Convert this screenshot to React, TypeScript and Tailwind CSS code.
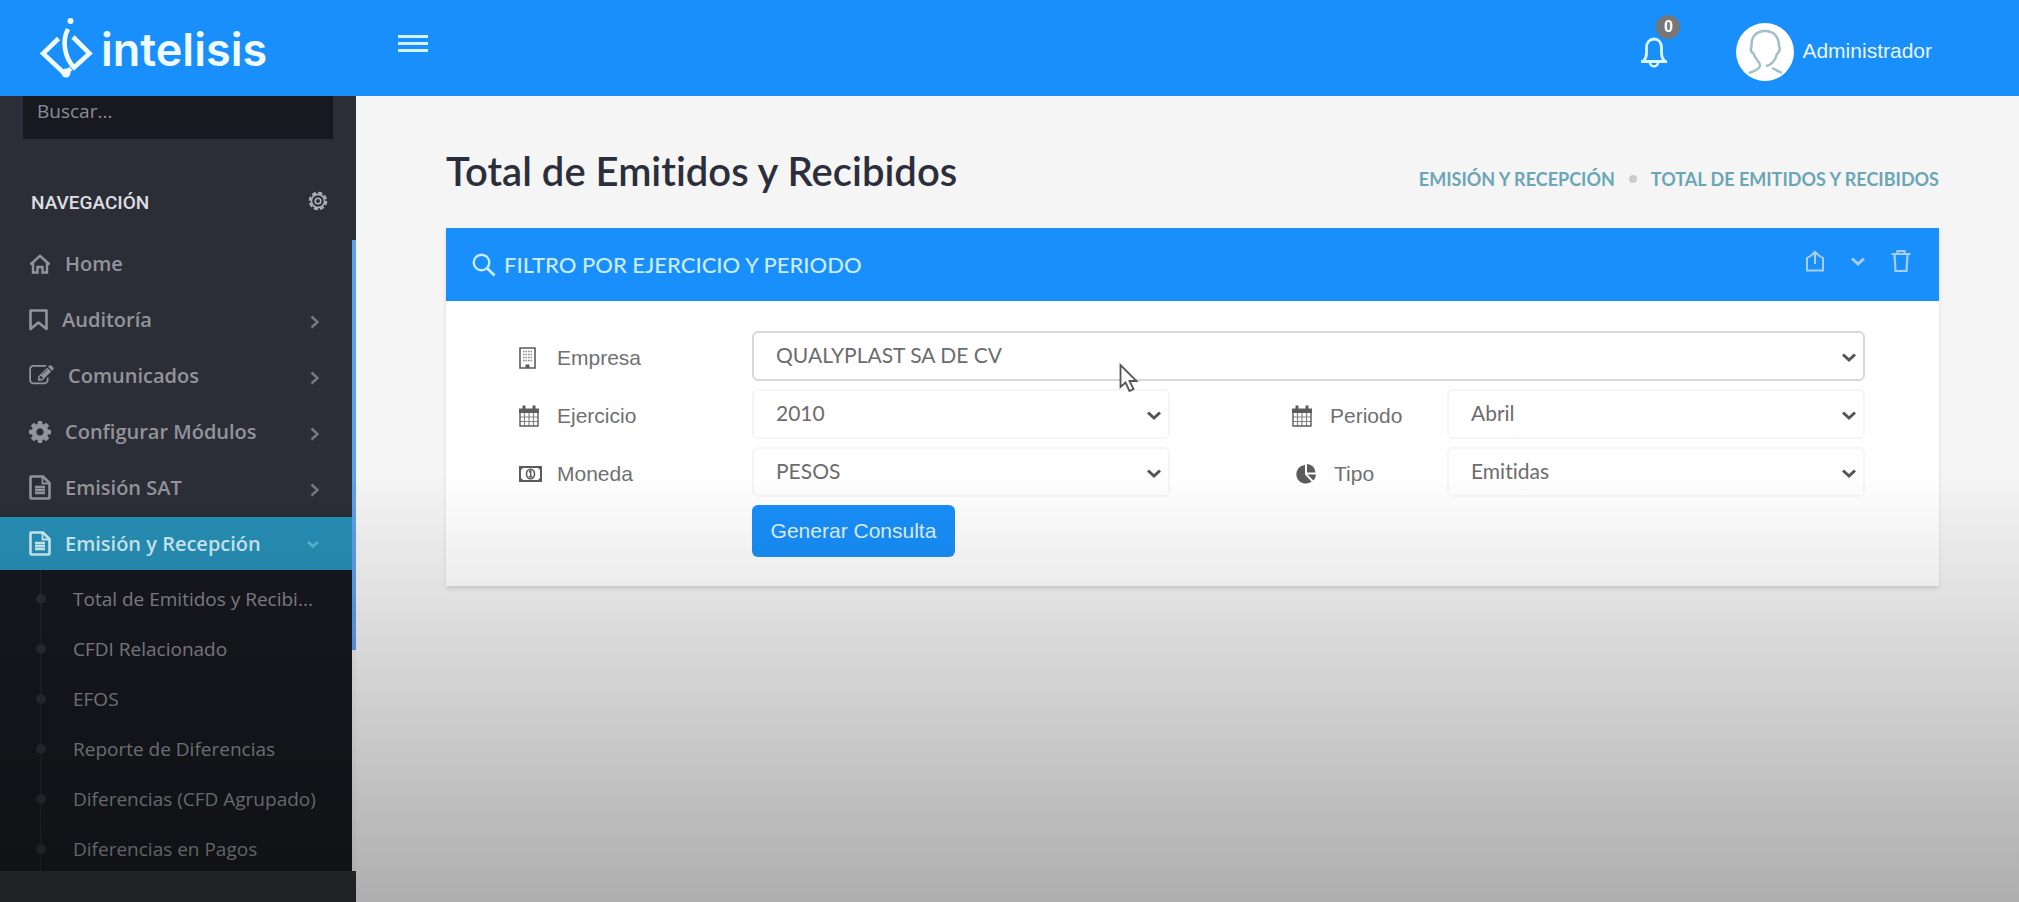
import type { ReactNode } from 'react';

type IconProps = { className?: string };

const Icon = ({ className = 'size-6', box = '0 0 24 24', children }: IconProps & { box?: string; children: ReactNode }) => (
  <svg viewBox={box} className={className} fill="none" stroke="currentColor" strokeWidth={2} aria-hidden="true">
    {children}
  </svg>
);

const HomeIcon = () => (
  <Icon box="0 0 22 20" className="h-5 w-[22px]">
    <path d="M1.5 10.5 11 1.8l9.500 8.700" strokeWidth={2.400} />
    <path d="M4 9v9.500h4.500V13h5v5.500H18V9" strokeWidth={2.400} />
  </Icon>
);

const BookmarkIcon = () => (
  <Icon box="0 0 19 22" className="h-[22px] w-[19px]">
    <path d="M1.500 1.500h16v18.500l-8-6.500-8 6.500z" strokeWidth={2.600} strokeLinejoin="round" />
  </Icon>
);

const EditIcon = () => (
  <svg viewBox="0 128 1792 1536" className="h-[21px] w-[25px]" fill="currentColor" aria-hidden="true">
    <path d="M888 1184l116-116-152-152-116 116v56h96v96h56zm440-720q-16-16-33 1l-350 350q-17 17-1 33t33-1l350-350q17-17 1-33zm80 594v190q0 119-84.500 203.500t-203.500 84.500h-832q-119 0-203.500-84.500t-84.500-203.500v-832q0-119 84.500-203.500t203.500-84.500h832q63 0 117 25 15 7 18 23 3 17-9 29l-49 49q-14 14-32 8-23-6-45-6h-832q-66 0-113 47t-47 113v832q0 66 47 113t113 47h832q66 0 113-47t47-113v-126q0-13 9-22l64-64q15-15 35-7t20 29zm-96-738l288 288-672 672h-288v-288zm444 132l-92 92-288-288 92-92q28-28 68-28t68 28l152 152q28 28 28 68t-28 68z" />
  </svg>
);

const CogIcon = () => (
  <svg viewBox="128 128 1536 1536" className="size-[22px]" fill="currentColor" aria-hidden="true">
    <path d="M1152 896q0-106-75-181t-181-75-181 75-75 181 75 181 181 75 181-75 75-181zm512-109v222q0 12-8 23t-20 13l-185 28q-19 54-39 91 35 50 107 138 10 12 10 25t-9 23q-27 37-99 108t-94 71q-12 0-26-9l-138-108q-44 23-91 38-16 136-29 186-7 28-36 28h-222q-14 0-24.500-8.500t-11.500-21.500l-28-184q-49-16-90-37l-141 107q-10 9-25 9-14 0-25-11-126-114-165-168-7-10-7-23 0-12 8-23 15-21 51-66.500t54-70.500q-27-50-41-99l-183-27q-13-2-21-12.500t-8-23.500v-222q0-12 8-23t19-13l186-28q14-46 39-92-40-57-107-138-10-12-10-24 0-10 9-23 26-36 98.500-107.500t94.500-71.500q13 0 26 10l138 107q44-23 91-38 16-136 29-186 7-28 36-28h222q14 0 24.500 8.500t11.500 21.500l28 184q49 16 90 37l142-107q9-9 24-9 13 0 25 10 129 119 165 170 7 8 7 22 0 12-8 23-15 21-51 66.500t-54 70.500q26 50 41 98l183 28q13 2 21 12.500t8 23.500z" />
  </svg>
);

const FileIcon = () => (
  <Icon box="0 0 22 25" className="h-[25px] w-[22px]">
    <path d="M1.500 2.500q0-1 1-1H14l6.500 6.500v14.500q0 1-1 1h-17q-1 0-1-1z" strokeWidth={2.600} />
    <path d="M13.500 1.500v7h7" strokeWidth={1.800} />
    <path d="M6 12h10M6 15h10M6 18h10" strokeWidth={2.400} />
  </Icon>
);

const GearOutlineIcon = () => (
  <Icon box="0 0 20 20" className="size-5">
    <circle cx="10" cy="10" r="8.300" strokeWidth={2} strokeDasharray="4.200 2.320" />
    <circle cx="10" cy="10" r="6.600" strokeWidth={1.600} />
    <circle cx="10" cy="10" r="2.800" strokeWidth={1.600} />
  </Icon>
);

const BellIcon = () => (
  <Icon box="0 0 28 31" className="h-[31px] w-7">
    <path d="M1 24.500h26M3.500 24q3-3 3-8v-5.500C6.500 5.500 9.500 2 14 2s7.500 3.500 7.500 8.500V16q0 5 3 8" strokeWidth={2.800} />
    <path d="M10 25.500c0 5 8 5 8 0" strokeWidth={2.400} />
  </Icon>
);

const ShareIcon = () => (
  <Icon box="0 0 20 22" className="h-[22px] w-5">
    <path d="M5.500 6 2 8v12.500h16V8l-3.500-2" />
    <path d="M10 14V2M5 6.500 10 1.800l5 4.700" />
  </Icon>
);

const TrashIcon = () => (
  <Icon box="0 0 20 24" className="h-6 w-5">
    <path d="M.500 5h19M3.500 5.500 4.500 22h11l1-16.500M6.500 5V2h7v3" strokeWidth={2.200} />
  </Icon>
);

const Chevron = ({ className }: { className: string }) => (
  <svg viewBox="0 0 16 12" className={className} fill="none" stroke="currentColor" strokeWidth={3} aria-hidden="true">
    <path d="M2 3.500 8 9l6-5.500" />
  </svg>
);

const ChevronRight = () => (
  <svg viewBox="0 0 10 14" className="h-3.5 w-2.5" fill="none" stroke="currentColor" strokeWidth={2.400} aria-hidden="true">
    <path d="M1.500 1.500 7.500 7l-6 5.500" />
  </svg>
);

const SearchIcon = () => (
  <Icon className="size-6">
    <circle cx="9.500" cy="9.500" r="7.800" strokeWidth={2.400} />
    <path d="m15.200 15.200 7.300 7.300" strokeWidth={2.800} />
  </Icon>
);

const BuildingIcon = () => (
  <Icon box="0 0 17 22" className="h-[22px] w-[17px]">
    <path d="M1 1h15v20H1z" strokeWidth={1.600} />
    <path d="M4 4.500h9M4 7.500h9M4 10.500h9M4 13.500h9" strokeWidth={1.600} strokeDasharray="1.600 .900" opacity=".7" />
    <path d="M6.500 17.500h4V21h-4z" fill="currentColor" stroke="none" />
  </Icon>
);

const CalendarIcon = () => (
  <Icon box="0 0 20 22" className="h-[22px] w-5">
    <path d="M0 3.500h20V8H0z" fill="currentColor" stroke="none" />
    <path d="M5 .500v5M15 .500v5" strokeWidth={3} />
    <path d="M1 7v14h18V7" strokeWidth={1.400} />
    <path d="M1 12h18M1 16.500h18M5.500 8v13M10 8v13M14.500 8v13" strokeWidth={1.200} opacity=".75" />
  </Icon>
);

const MoneyIcon = () => (
  <Icon box="0 0 23 16" className="h-4 w-[23px]">
    <path d="M1 1h21v14H1z" />
    <path d="M1 1h4L1 5zM22 1v4l-4-4zM1 15v-4l4 4zM22 15h-4l4-4z" fill="currentColor" stroke="none" />
    <ellipse cx="11.500" cy="8" rx="4" ry="4.800" strokeWidth={1.600} />
    <path d="M10 6.200 11.700 5v5.500M9.800 10.700h3.600" strokeWidth={1.500} />
  </Icon>
);

const PieIcon = () => (
  <svg viewBox="0 0 20 20" className="size-5" fill="currentColor" aria-hidden="true">
    <path d="M9 1v9.500l6.500 7A9.300 9.300 0 1 1 9 1z" />
    <path d="M11 0a9 9 0 0 1 8.500 8.500H11z" />
    <path d="M11.500 10.500H20q-.2 3.500-2.600 6z" />
  </svg>
);

const Logo = () => (
  <a href="#inicio" className="flex items-center gap-2 text-[#f0fbff]">
    <svg viewBox="0 0 53 60" className="h-[60px] w-[53px]" fill="none" stroke="currentColor" strokeWidth={4.600} aria-hidden="true">
      <circle cx="30.500" cy="3" r="3" fill="currentColor" stroke="none" />
      <path d="M18.500 20.500 3 35.500 24.500 55.500l6.500-5" />
      <path d="M28 11c-6 11-4 28 6 38.500L49.500 35.500 33 19" />
      <circle cx="26" cy="55" r="4.500" fill="currentColor" stroke="none" />
    </svg>
    <span className="pt-1 font-['Inter',sans-serif] text-[45px] leading-[60px] font-semibold">intelisis</span>
  </a>
);

const navItems: { label: string; icon: ReactNode; arrow: boolean }[] = [
  { label: 'Home', icon: <HomeIcon />, arrow: false },
  { label: 'Auditoría', icon: <BookmarkIcon />, arrow: true },
  { label: 'Comunicados', icon: <EditIcon />, arrow: true },
  { label: 'Configurar Módulos', icon: <CogIcon />, arrow: true },
  { label: 'Emisión SAT', icon: <FileIcon />, arrow: true },
];

const subItems = [
  'Total de Emitidos y Recibi...',
  'CFDI Relacionado',
  'EFOS',
  'Reporte de Diferencias',
  'Diferencias (CFD Agrupado)',
  'Diferencias en Pagos',
];

const FieldLabel = ({ id, icon, children, className = '' }: { id: string; icon: ReactNode; children: ReactNode; className?: string }) => (
  <label htmlFor={id} className={`flex items-center gap-3.5 pt-1 text-[21px] text-[#707070] ${className}`}>
    <span className="flex w-6 items-center text-[#5c5c5c]">{icon}</span>
    {children}
  </label>
);

const Select = ({ id, value, strong = false, className = '' }: { id: string; value: string; strong?: boolean; className?: string }) => (
  <div className={`relative ${className}`}>
    <select
      id={id}
      className={`h-[50px] w-full appearance-none rounded-md border-2 bg-white pr-10 pb-0.5 pl-[22px] font-['Lato',sans-serif] text-[21px] text-[#6c6c6c] outline-none ${strong ? 'border-[#d8d8d8]' : 'border-[#f5f5f5]'}`}
    >
      <option>{value}</option>
    </select>
    <Chevron className="pointer-events-none absolute top-5 right-2 h-3 w-4 text-[#555]" />
  </div>
);

export default function App() {
  return (
    <div className="relative flex min-h-screen flex-col bg-[#f5f5f5] font-['Liberation_Sans',sans-serif] [font-variant-ligatures:none]">
      <header className="z-10 flex h-24 items-center bg-[#188ffa]">
        <div className="flex w-[356px] shrink-0 pl-10">
          <Logo />
        </div>
        <button type="button" aria-label="Menú" className="mb-2.5 ml-[42px] flex w-[30px] flex-col gap-1">
          <span className="h-[3px] w-full bg-[#d4f1ff]" />
          <span className="h-[3px] w-full bg-[#d4f1ff]" />
          <span className="h-[3px] w-full bg-[#d4f1ff]" />
        </button>
        <div className="ml-auto flex items-center pt-2 pr-[87px] text-white">
          <button type="button" aria-label="Notificaciones" className="relative mr-[68px] text-[#dcf6ff]">
            <BellIcon />
            <span className="absolute -top-[22px] -right-3 flex size-6 items-center justify-center rounded-full bg-[#777] text-base font-bold text-white">
              0
            </span>
          </button>
          <a href="#perfil" className="flex items-center gap-2 text-[21px] text-[#e8f6ff]">
            <svg viewBox="0 0 58 58" className="size-[58px]" fill="none" stroke="#9fc0c4" strokeWidth={2.500} aria-hidden="true">
              <circle cx="29" cy="29" r="29" fill="#fff" stroke="none" />
              <path d="M13 50c6-2 11-4 11-7.500 0-4-5-6-6.500-12q-4-2-2-7C15 14 20 8 29 8s14 6 14 15q2 5-2 8c-1.500 6-4 10.500-11 12M36 45l10 5" />
            </svg>
            <span className="pb-0.5">Administrador</span>
          </a>
        </div>
      </header>

      <div className="flex flex-1">
        <aside className="flex w-[356px] shrink-0 flex-col overflow-hidden bg-[#2c2e37] font-['Open_Sans',sans-serif]">
          <div className="px-[23px]">
            <input
              aria-label="Buscar"
              placeholder="Buscar..."
              className="-mt-3 block h-[55px] w-full bg-[#181920] px-3.5 pb-0.5 text-[19px] text-white outline-none placeholder:text-[#8b8d94]"
            />
          </div>
          <div className="flex h-[94px] items-end justify-between pr-7 pb-[18px] pl-[31px]">
            <h2 className="font-['Roboto',sans-serif] text-[19px] leading-6 font-medium text-[#dedee1]">NAVEGACIÓN</h2>
            <button type="button" aria-label="Ajustes" className="pb-1 text-[#b0b1b6]">
              <GearOutlineIcon />
            </button>
          </div>
          <nav className="relative flex flex-1 flex-col pt-1 pr-1">
            <ul className="flex flex-col gap-[3px] pb-[3px]">
              {navItems.map((item) => (
                <li key={item.label}>
                  <a href="#seccion" className="flex h-[53px] items-center gap-3.5 pr-8 pl-[29px] text-xl font-semibold text-[#93949b]">
                    {item.icon}
                    <span>{item.label}</span>
                    {item.arrow && (
                      <span className="ml-auto pt-1 text-[#777980]">
                        <ChevronRight />
                      </span>
                    )}
                  </a>
                </li>
              ))}
            </ul>
            <a href="#seccion" className="flex h-[53px] items-center gap-3.5 bg-[#278fb6] pr-8 pl-[29px] text-xl font-semibold text-[#cdebf4]">
              <FileIcon />
              <span>Emisión y Recepción</span>
              <Chevron className="ml-auto h-2.5 w-3.5 text-[#5bb8d6]" />
            </a>
            <div className="relative flex-1 bg-[#17181e] pt-[9px] pb-0.5">
              <span className="absolute top-0 bottom-0 left-10 w-px bg-[#24262c]" />
              <ul className="flex flex-col gap-2.5">
                {subItems.map((label) => (
                  <li key={label} className="relative flex h-10 items-center pl-9">
                    <span className="mr-[27px] size-2.5 shrink-0 rounded-full bg-[#2a2c32]" />
                    <a href="#seccion" className="text-[19px] whitespace-nowrap text-[#84858b]">
                      {label}
                    </a>
                  </li>
                ))}
              </ul>
            </div>
            <span className="absolute top-[7px] right-0 bottom-0 w-1 bg-[#eee]">
              <span className="block h-[65%] bg-[#5a9ff0]" />
            </span>
          </nav>
          <div className="h-[31px] shrink-0 bg-[#2c2e33]" />
        </aside>

        <main className="min-w-0 flex-1 pr-20 pl-[90px]">
          <div className="flex h-[132px] items-center justify-between pt-[18px] font-['Lato',sans-serif]">
            <h1 className="text-[40px] leading-[52px] font-semibold text-[#2c2e3c]">Total de Emitidos y Recibidos</h1>
            <nav aria-label="Ruta" className="flex items-center gap-3.5 pt-4 text-lg font-bold text-[#6ba6b5]">
              <a href="#emision">EMISIÓN Y RECEPCIÓN</a>
              <span className="size-2 rounded-full bg-[#ccc]" />
              <a href="#total">TOTAL DE EMITIDOS Y RECIBIDOS</a>
            </nav>
          </div>

          <section className="bg-white shadow-[0_3px_4px_rgba(0,0,0,0.1)]">
            <div className="flex h-[73px] items-center bg-[#188ffa] pr-7 pl-[26px] text-[#c9ecff]">
              <SearchIcon />
              <h2 className="ml-2 font-['Lato',sans-serif] text-[22px] font-medium">FILTRO POR EJERCICIO Y PERIODO</h2>
              <div className="ml-auto flex items-center gap-[25px] pb-2 text-[#a9cdf5]">
                <button type="button" aria-label="Exportar">
                  <ShareIcon />
                </button>
                <button type="button" aria-label="Contraer">
                  <Chevron className="h-3 w-4" />
                </button>
                <button type="button" aria-label="Eliminar">
                  <TrashIcon />
                </button>
              </div>
            </div>

            <form className="relative grid grid-cols-[233px_1fr_277px_1fr] gap-y-2 pt-[30px] pr-[74px] pb-[29px] pl-[73px]">
              <FieldLabel id="empresa" icon={<BuildingIcon />}>Empresa</FieldLabel>
              <Select id="empresa" value="QUALYPLAST SA DE CV" strong className="col-span-3" />

              <FieldLabel id="ejercicio" icon={<CalendarIcon />}>Ejercicio</FieldLabel>
              <Select id="ejercicio" value="2010" />
              <FieldLabel id="periodo" icon={<CalendarIcon />} className="pl-[122px]">Periodo</FieldLabel>
              <Select id="periodo" value="Abril" />

              <FieldLabel id="moneda" icon={<MoneyIcon />}>Moneda</FieldLabel>
              <Select id="moneda" value="PESOS" />
              <FieldLabel id="tipo" icon={<PieIcon />} className="pl-[126px]">Tipo</FieldLabel>
              <Select id="tipo" value="Emitidas" />

              <button type="button" className="col-start-2 h-[52px] w-[203px] rounded-md bg-[#188ffa] text-[21px] text-[#dff3ff]">
                Generar Consulta
              </button>

              <svg viewBox="0 0 20 30" className="absolute top-[62px] left-[673px] h-[30px] w-5" fill="#fff" stroke="#555" strokeWidth={1.800} aria-hidden="true">
                <path d="M1.500 2v22l5-4.500L10.500 28l4-2-4-8h7z" />
              </svg>
            </form>
          </section>
        </main>
      </div>

      <div className="pointer-events-none absolute inset-x-0 bottom-0 z-20 h-[430px] bg-linear-to-b from-black/0 to-black/29" />
    </div>
  );
}
